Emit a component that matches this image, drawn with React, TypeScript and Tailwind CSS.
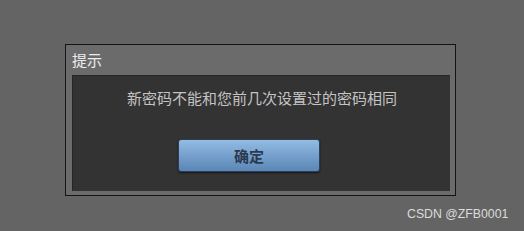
export default function App() {
  return (
    <div className="relative w-[524px] h-[231px] bg-[#646464] pl-[65px] pt-[44px] font-['Noto_Sans_CJK_SC',sans-serif]">
      <div className="flex w-[391px] h-[152px] flex-col border border-[#141414] bg-[#6b6b6b]">
        <div className="h-[30px] pl-[6px] pt-[5px] text-[15px] leading-[20px] text-[#ececec]">
          提示
        </div>
        <div className="ml-[6px] mr-[5px] flex h-[116px] flex-col border-l border-t border-[#262626] bg-[#333333]">
          <p className="pt-[12px] pl-[54px] text-[15px] leading-[20px] text-[#c4c4c4]">
            新密码不能和您前几次设置过的密码相同
          </p>
          <button className="ml-[105px] mt-[31px] h-[33px] w-[142px] rounded-[3px] border border-[#2c3e58] bg-gradient-to-b from-[#93bbe3] to-[#5a86b6] text-[15px] font-bold leading-[20px] text-[#2b3a4f] shadow-[0_1px_2px_rgba(0,0,0,0.6)]">
            确定
          </button>
        </div>
      </div>
      <span className="absolute left-[407px] top-[206px] font-['Liberation_Sans',sans-serif] text-[12.3px] leading-[16px] text-[#dcdcdc]">
        CSDN @ZFB0001
      </span>
    </div>
  );
}
